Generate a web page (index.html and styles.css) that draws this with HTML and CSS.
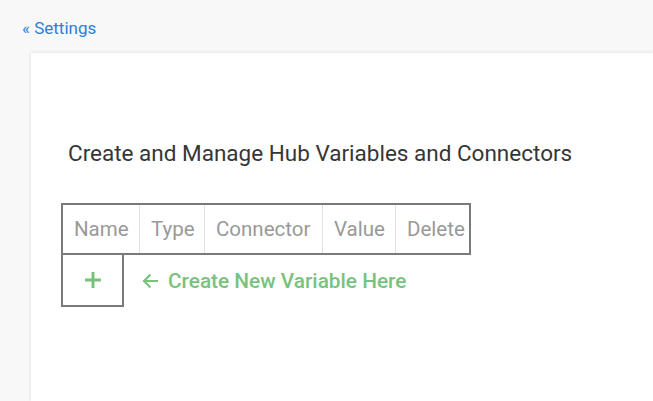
FILE: index.html
```html
<!DOCTYPE html>
<html>
<head>
<meta charset="utf-8">
<link rel="stylesheet" href="styles.css">
</head>
<body>
<div class="page">
  <a class="back" href="#">« Settings</a>
  <div class="card">
    <h2 class="title">Create and Manage Hub Variables and Connectors</h2>
    <div class="vars">
      <div class="head">
        <div class="hc c-name">Name</div>
        <div class="hc c-type">Type</div>
        <div class="hc c-conn">Connector</div>
        <div class="hc c-val">Value</div>
        <div class="hc c-del">Delete</div>
      </div>
      <div class="addrow">
        <div class="plus"><svg width="16" height="16" viewBox="0 0 16 16"><path d="M8 0V16M0 8H16" stroke="#79c27c" stroke-width="3"/></svg></div>
        <div class="hint"><svg class="arrow" width="17" height="16" viewBox="0 0 17 16"><path d="M16 8H2M8.5 1.5L2 8l6.5 6.5" fill="none" stroke="#79c27c" stroke-width="2.2"/></svg><span>Create New Variable Here</span></div>
      </div>
    </div>
  </div>
</div>
</body>
</html>
```
FILE: styles.css
```css
html, body {
  margin: 0;
  padding: 0;
  height: 100%;
  overflow: hidden;
}
body {
  background: #f8f8f8;
  font-family: Roboto, "Liberation Sans", sans-serif;
}
.page {
  padding: 17px 0 0 22px;
}
.back {
  display: block;
  color: #2b80d6;
  text-decoration: none;
  font-size: 17px;
  line-height: 22px;
}
.card {
  margin: 14px 0 0 9px;
  background: #fff;
  box-shadow: 0 0 4px rgba(0,0,0,0.12);
  height: 348px;
  padding: 84px 0 0 30px;
  box-sizing: border-box;
}
.title {
  margin: 0 0 34px 7px;
  font-weight: 400;
  font-size: 22.5px;
  line-height: 32px;
  color: #363636;
}
.vars {
  display: flex;
  flex-direction: column;
  align-items: flex-start;
}
.head {
  display: flex;
  border: 2px solid #7a7a7a;
  height: 48px;
}
.hc {
  display: flex;
  align-items: center;
  justify-content: flex-start;
  box-sizing: border-box;
  padding-left: 11px;
  font-size: 20.5px;
  color: #999;
  border-left: 1px solid #e2e2e2;
}
.hc:first-child { border-left: none; }
.c-name { width: 76px; }
.c-type { width: 65px; }
.c-conn { width: 118px; }
.c-val { width: 73px; }
.c-del { width: 74px; }
.addrow {
  display: flex;
  align-items: center;
}
.plus {
  width: 59px;
  height: 50px;
  border: 2px solid #7a7a7a;
  border-top: none;
  display: flex;
  align-items: center;
  justify-content: center;
}
.hint {
  display: flex;
  align-items: center;
  margin-left: 18px;
  color: #79c27c;
  font-size: 20.8px;
  font-weight: 500;
}
.arrow {
  margin-right: 9px;
}
```
